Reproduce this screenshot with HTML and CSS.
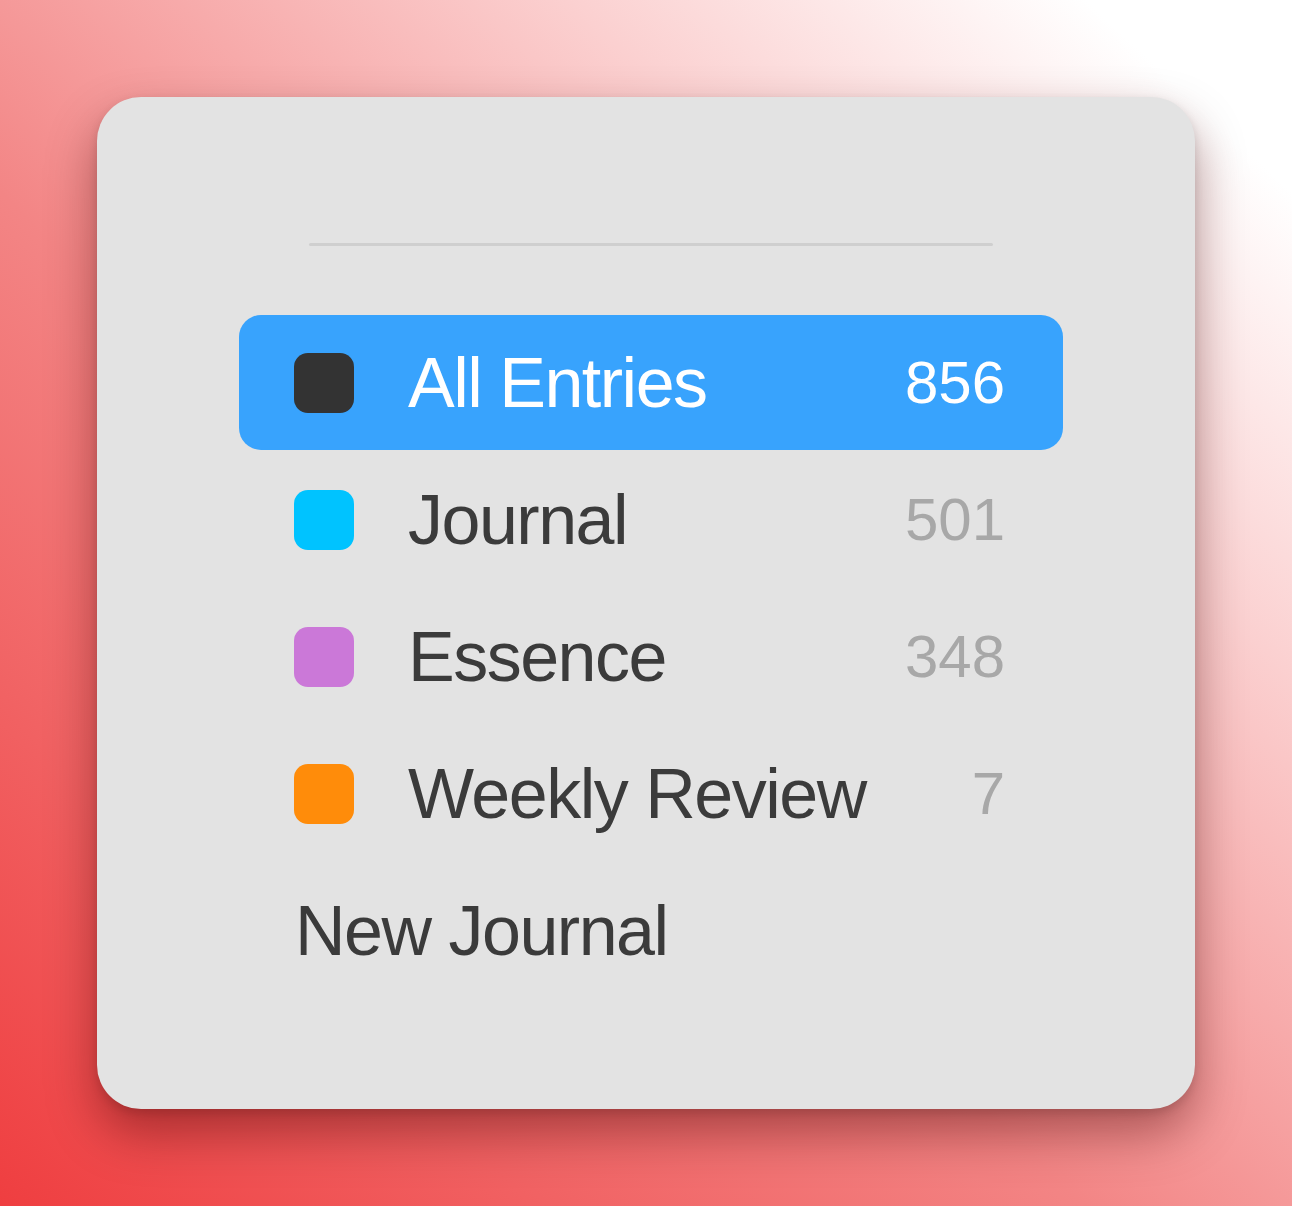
FILE: index.html
```html
<!DOCTYPE html>
<html lang="en">
<head>
<meta charset="utf-8">
<title>Journals</title>
<link rel="stylesheet" href="styles.css">
</head>
<body>
<div class="card">
  <div class="divider"></div>
  <ul class="list">
    <li class="row selected">
      <span class="swatch swatch-dark"></span>
      <span class="label">All Entries</span>
      <span class="count">856</span>
    </li>
    <li class="row">
      <span class="swatch swatch-cyan"></span>
      <span class="label">Journal</span>
      <span class="count">501</span>
    </li>
    <li class="row">
      <span class="swatch swatch-purple"></span>
      <span class="label">Essence</span>
      <span class="count">348</span>
    </li>
    <li class="row">
      <span class="swatch swatch-orange"></span>
      <span class="label">Weekly Review</span>
      <span class="count">7</span>
    </li>
    <li class="row new">
      <span class="label">New Journal</span>
    </li>
  </ul>
</div>
</body>
</html>
```

FILE: styles.css
```css
html, body {
  margin: 0;
  padding: 0;
}
body {
  width: 1292px;
  height: 1206px;
  display: flex;
  align-items: center;
  justify-content: center;
  background: linear-gradient(to top right, #ef3e40 0%, #f38585 42%, #fbd0d0 72%, #ffffff 92%);
  font-family: "Liberation Sans", Arial, sans-serif;
  overflow: hidden;
}
.card {
  box-sizing: border-box;
  width: 1098px;
  height: 1012px;
  background: #e3e3e3;
  border-radius: 44px;
  box-shadow: 0 24px 50px rgba(70, 0, 0, 0.42), 0 4px 10px rgba(0, 0, 0, 0.12);
  padding: 146px 0 0 142px;
}
.divider {
  width: 684px;
  height: 3px;
  margin-left: 70px;
  background: #cfcfcf;
  border-radius: 2px;
}
.list {
  list-style: none;
  margin: 69px 0 0 0;
  padding: 0;
  width: 824px;
  display: flex;
  flex-direction: column;
  gap: 2px;
}
.row {
  box-sizing: border-box;
  height: 135px;
  display: flex;
  align-items: center;
  padding: 0 58px 0 55px;
  border-radius: 22px;
  color: #3b3b3b;
}
.row.selected {
  background: #38a3fd;
  color: #ffffff;
}
.swatch {
  flex: none;
  width: 60px;
  height: 60px;
  border-radius: 14px;
  margin-right: 54px;
}
.swatch-dark { background: #333333; }
.swatch-cyan { background: #00c3ff; }
.swatch-purple { background: #cb78d8; }
.swatch-orange { background: #ff8c0a; }
.label {
  flex: 1;
  font-size: 70px;
  letter-spacing: -1.5px;
  line-height: 1;
  white-space: nowrap;
}
.count {
  font-size: 60px;
  line-height: 1;
  color: #a8a8a8;
}
.row.selected .count {
  color: #ffffff;
}
.row.new {
  padding-left: 56px;
}
```
